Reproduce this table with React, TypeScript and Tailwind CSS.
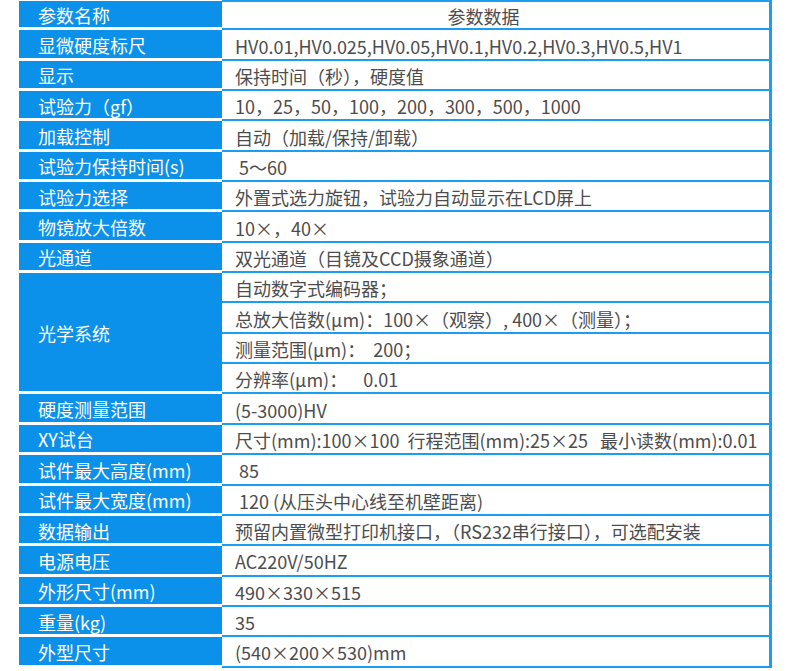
const font = { fontFamily: '"Noto Sans CJK SC", "Noto Sans", sans-serif' };

type Row = { label: string; values: string[]; center?: boolean };

const rows: Row[] = [
  { label: '参数名称', values: ['参数数据'], center: true },
  { label: '显微硬度标尺', values: ['HV0.01,HV0.025,HV0.05,HV0.1,HV0.2,HV0.3,HV0.5,HV1'] },
  { label: '显示', values: ['保持时间（秒），硬度值'] },
  { label: '试验力（gf）', values: ['10，25，50，100，200，300，500，1000'] },
  { label: '加载控制', values: ['自动（加载/保持/卸载）'] },
  { label: '试验力保持时间(s)', values: [' 5～60'] },
  { label: '试验力选择', values: ['外置式选力旋钮，试验力自动显示在LCD屏上'] },
  { label: '物镜放大倍数', values: ['10×，40×'] },
  { label: '光通道', values: ['双光通道（目镜及CCD摄象通道）'] },
  {
    label: '光学系统',
    values: [
      '自动数字式编码器；',
      '总放大倍数(μm)：100×（观察）, 400×（测量）；',
      '测量范围(μm)：  200；',
      '分辨率(μm)：    0.01',
    ],
  },
  { label: '硬度测量范围', values: ['(5-3000)HV'] },
  { label: 'XY试台', values: ['尺寸(mm):100×100  行程范围(mm):25×25   最小读数(mm):0.01'] },
  { label: '试件最大高度(mm)', values: [' 85'] },
  { label: '试件最大宽度(mm)', values: [' 120 (从压头中心线至机壁距离)'] },
  { label: '数据输出', values: ['预留内置微型打印机接口，（RS232串行接口），可选配安装'] },
  { label: '电源电压', values: ['AC220V/50HZ'] },
  { label: '外形尺寸(mm)', values: ['490×330×515'] },
  { label: '重量(kg)', values: ['35'] },
  { label: '外型尺寸', values: ['(540×200×530)mm'] },
];

export default function App() {
  return (
    <div className="h-[671px] w-[790px] overflow-hidden bg-white" style={font}>
      <div className="ml-[19px] w-[753px]">
        {rows.map((row, i) => (
          <div key={row.label} className="flex">
            <div
              className={`flex w-[203px] shrink-0 items-center border-b-[3px] border-white bg-[#0b91ea] pt-[2px] pl-[19px] text-[18px] leading-[20px] text-white ${i === 0 ? 'border-t-[1px]' : ''}`}
            >
              {row.label}
            </div>
            <div className="flex flex-1 flex-col">
              {row.values.map((v, j) => (
                <div
                  key={j}
                  className={`flex h-[30.35px] items-center border-b-2 border-r-[3px] border-[#1a9ef0] pt-[2px] text-[18px] leading-[20px] whitespace-pre text-[#4d4d4d] ${row.center ? 'justify-center pr-[24px]' : 'pl-[13px]'} ${i === 0 ? 'border-t-2' : ''}`}
                >
                  {v}
                </div>
              ))}
            </div>
          </div>
        ))}
      </div>
    </div>
  );
}
